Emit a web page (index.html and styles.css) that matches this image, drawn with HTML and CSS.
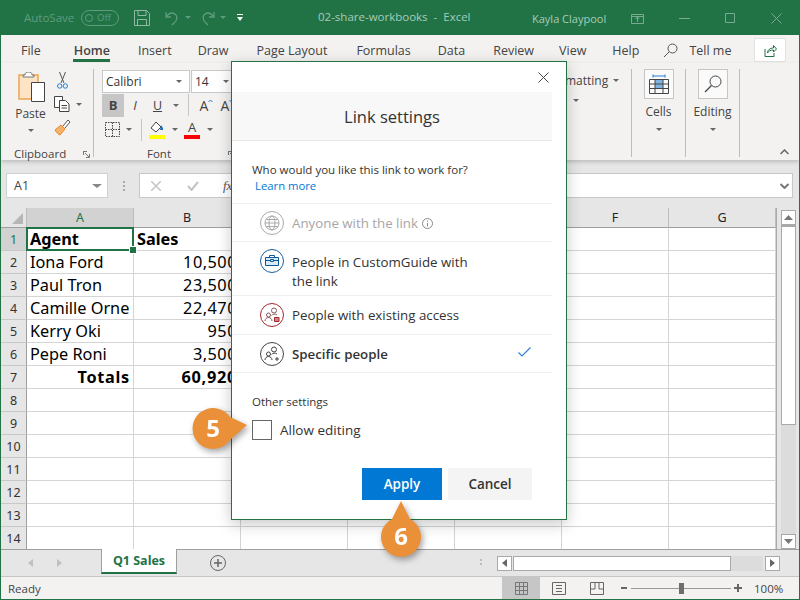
FILE: index.html
```html
<!DOCTYPE html>
<html lang="en">
<head>
<meta charset="utf-8">
<title>02-share-workbooks - Excel</title>
<link rel="stylesheet" href="styles.css">
</head>
<body>
<div class="app">
  <header class="titlebar">
    <span class="autosave">AutoSave</span>
    <span class="toggle"><i></i><b>Off</b></span>
    <svg class="t-save" width="16" height="16" viewBox="0 0 16 16" fill="none" stroke="#8fb9a3"><path d="M.5.500h12l3 3v12H.5z"/><path d="M4 .5v5h8v-5M3.500 15.500v-6h9v6"/></svg>
    <svg class="t-undo" width="28" height="18" viewBox="0 0 28 18" fill="none" stroke="#5f9c7e" stroke-width="1.3"><path d="M2 3v5h5M2 8c3-4 6-5 9-3 3 2 2 7-1 9l-2 2"/><path d="M21 7h6l-3 3z" fill="#5f9c7e" stroke="none"/></svg>
    <svg class="t-redo" width="28" height="18" viewBox="0 0 28 18" fill="none" stroke="#5f9c7e" stroke-width="1.3"><path d="M15 3v5h-5M15 8c-3-4-6-5-9-3-3 2-2 7 1 9l2 2"/><path d="M21 7h6l-3 3z" fill="#5f9c7e" stroke="none"/></svg>
    <svg class="t-qat" width="6" height="7" viewBox="0 0 6 7"><path d="M0 0h6v1H0zM0 3h6L3 7z" fill="#fff"/></svg>
    <span class="doc">02-share-workbooks&nbsp; -&nbsp; Excel</span>
    <span class="user">Kayla Claypool</span>
    <svg class="t-ribbon" width="13" height="10" viewBox="0 0 13 10" fill="none" stroke="#79ab92"><path d="M.5.500h12v9H.5zM6.500 8V3M4.500 5l2-2 2 2M.5 2.500h12"/></svg>
    <svg class="t-min" width="11" height="11" viewBox="0 0 11 11" stroke="#79ab92"><path d="M0 5.500h11"/></svg>
    <svg class="t-max" width="11" height="11" viewBox="0 0 11 11" fill="none" stroke="#79ab92"><path d="M.5.500h9v9h-9z"/></svg>
    <svg class="t-close" width="11" height="11" viewBox="0 0 11 11" stroke="#79ab92"><path d="M.5.500l10 10M10.500.5l-10 10"/></svg>
  </header>

  <nav class="tabs">
    <span class="tab file">File</span>
    <span class="tab active">Home</span>
    <span class="tab t-insert">Insert</span>
    <span class="tab">Draw</span>
    <span class="tab t-page">Page Layout</span>
    <span class="tab t-formulas">Formulas</span>
    <span class="tab">Data</span>
    <span class="tab t-review">Review</span>
    <span class="tab t-view">View</span>
    <span class="tab t-help">Help</span>
    <svg class="tell-icon" width="15" height="15" viewBox="0 0 15 15" fill="none" stroke="#555"><circle cx="9.500" cy="5.500" r="4.500"/><path d="M6.300 8.700L1 14"/></svg>
    <span class="tab tell">Tell me</span>
    <span class="share"><svg width="13" height="13" viewBox="0 0 13 13" fill="none" stroke="#217346"><path d="M1 5v7.500h9V9"/><path d="M3.500 9c0-3 2.500-5 6-5V1.500l3 3.500-3 3V6c-3 0-5 1-6 3z"/></svg></span>
  </nav>

  <section class="ribbon">
    <div class="group clipboard">
      <div class="group-body clip-body">
        <div class="paste">
          <svg width="28" height="31" viewBox="0 0 28 31"><path d="M1 3h19v24H1z" fill="#fce4c4" stroke="#f0a44e" stroke-width="1.500"/><path d="M5 5h11V3h-2c0-2-1-3-3.500-3S7 1 7 3H5z" fill="#fff" stroke="#777"/><path d="M13.500 10.500h13v19h-13z" fill="#fff" stroke="#444"/></svg>
          <span>Paste</span>
          <i class="caret"></i>
        </div>
        <div class="clip-tools">
          <svg class="scissors" width="11" height="17" viewBox="0 0 11 17" fill="none"><path d="M2.500 0l4.500 11M8.500 0L4 11" stroke="#555"/><circle cx="2.700" cy="14" r="2.200" stroke="#2b7cd3"/><circle cx="8.300" cy="14" r="2.200" stroke="#2b7cd3"/></svg>
          <div class="clip-row"><svg width="16" height="16" viewBox="0 0 16 16" fill="#fff" stroke="#444"><path d="M.5.500h8v11h-8z"/><path d="M5.500 4.500h6l3.500 3.500v7.500H5.500z"/><path d="M7.500 9.500h5.500M7.500 12h5.500" fill="none"/></svg><i class="caret"></i></div>
          <svg width="17" height="17" viewBox="0 0 17 17"><path d="M1 11l6-5 4 4-5 6c-1 0-4-3-5-5z" fill="#f5b26b" stroke="#e8842c"/><path d="M9 7l5-6 2 2-5 6" fill="#fff" stroke="#555"/></svg>
        </div>
      </div>
      <div class="group-label"><span>Clipboard</span><svg class="launcher" width="7" height="7" viewBox="0 0 7 7" fill="none" stroke="#777"><path d="M0 .5h4M.5 0v4M2 2l4 4M6.500 3v3.500H3"/></svg></div>
    </div>

    <div class="group font">
      <div class="group-body font-body">
        <div class="font-row first">
          <span class="combo name">Calibri<i class="caret"></i></span>
          <span class="combo size">14<i class="caret"></i></span>
        </div>
        <div class="font-row second">
          <span class="fbtn bold">B</span>
          <span class="fbtn italic">I</span>
          <span class="fbtn under">U</span><i class="caret"></i>
          <span class="vsep"></span>
          <span class="fbtn grow">A<svg width="5" height="4" viewBox="0 0 5 4" fill="none" stroke="#2b7cd3"><path d="M.5 3l2-2 2 2"/></svg></span>
          <span class="fbtn grow">A<svg width="5" height="4" viewBox="0 0 5 4" fill="none" stroke="#2b7cd3"><path d="M.5 1l2 2 2-2"/></svg></span>
        </div>
        <div class="font-row third">
          <svg class="borders" width="15" height="15" viewBox="0 0 15 15" fill="none" stroke="#444" stroke-dasharray="1.500 1"><path d="M.5.500h14v14H.5zM7.500.5v14M.5 7.500h14"/></svg><i class="caret"></i>
          <span class="vsep"></span>
          <span class="color"><svg width="14" height="13" viewBox="0 0 14 13" fill="none"><path d="M1 7l5-6 5 5-5 5z" fill="#fff" stroke="#444"/><path d="M11 4l2 3v2h-3z" fill="#1f6fc0"/></svg><b class="yellow"></b></span><i class="caret"></i>
          <span class="color"><span class="color-a">A</span><b class="red"></b></span><i class="caret"></i>
        </div>
      </div>
      <div class="group-label"><span>Font</span><svg class="launcher" width="7" height="7" viewBox="0 0 7 7" fill="none" stroke="#777"><path d="M0 .5h4M.5 0v4M2 2l4 4M6.500 3v3.500H3"/></svg></div>
    </div>

    <div class="group styles">
      <div class="styles-body">
        <span class="styles-text">matting<i class="caret"></i></span>
        <span class="styles-more"><i class="caret"></i></span>
      </div>
    </div>

    <div class="group stack">
      <span class="bigbtn"><svg width="22" height="20" viewBox="0 0 22 20" fill="none" stroke="#444"><path d="M7 5h8v9H7z" fill="#7eb3e2" stroke="none"/><path d="M1.500 5.500h19v14h-19zM1.500 10h19M1.500 14.500h19M7 5.500v14M15 5.500v14"/><path d="M5 2h12M5 .5v3M17 .5v3" stroke="#2b7cd3"/></svg></span>
      <span class="stack-label">Cells</span>
      <i class="caret"></i>
    </div>
    <div class="group stack">
      <span class="bigbtn"><svg width="18" height="18" viewBox="0 0 18 18" fill="none" stroke="#444"><circle cx="11.500" cy="6.500" r="5.500"/><path d="M7.500 10.500L1 17" stroke-width="1.300"/></svg></span>
      <span class="stack-label">Editing</span>
      <i class="caret"></i>
    </div>
    <svg class="collapse" width="9" height="6" viewBox="0 0 9 6" fill="none" stroke="#666" stroke-width="1.500"><path d="M.5 5l4-4 4 4"/></svg>
  </section>

  <div class="formula">
    <span class="namebox">A1<i class="caret big"></i></span>
    <span class="dots"></span>
    <div class="fxbar">
      <svg width="10" height="10" viewBox="0 0 10 10" stroke="#c4c4c4" stroke-width="1.500"><path d="M0 0l10 10M10 0L0 10"/></svg>
      <svg class="fx-check" width="12" height="10" viewBox="0 0 12 10" fill="none" stroke="#c4c4c4" stroke-width="2"><path d="M1 5l3.500 4L11 1"/></svg>
      <span class="fx">fx</span>
      <svg class="fx-chevron" width="9" height="6" viewBox="0 0 9 6" fill="none" stroke="#777" stroke-width="2"><path d="M.5 1l4 4 4-4"/></svg>
    </div>
  </div>

  <main class="work">
    <div class="sheet">
      <div class="ch corner"><i></i></div><div class="ch sel">A</div><div class="ch">B</div><div class="ch"></div><div class="ch"></div><div class="ch"></div><div class="ch">F</div><div class="ch">G</div>
      <div class="rh sel">1</div><div class="c b a1">Agent</div><div class="c b">Sales</div><div class="c"></div><div class="c"></div><div class="c"></div><div class="c"></div><div class="c"></div>
      <div class="rh">2</div><div class="c">Iona Ford</div><div class="c n">10,500</div><div class="c"></div><div class="c"></div><div class="c"></div><div class="c"></div><div class="c"></div>
      <div class="rh">3</div><div class="c">Paul Tron</div><div class="c n">23,500</div><div class="c"></div><div class="c"></div><div class="c"></div><div class="c"></div><div class="c"></div>
      <div class="rh">4</div><div class="c">Camille Orne</div><div class="c n">22,470</div><div class="c"></div><div class="c"></div><div class="c"></div><div class="c"></div><div class="c"></div>
      <div class="rh">5</div><div class="c">Kerry Oki</div><div class="c n">950</div><div class="c"></div><div class="c"></div><div class="c"></div><div class="c"></div><div class="c"></div>
      <div class="rh">6</div><div class="c">Pepe Roni</div><div class="c n">3,500</div><div class="c"></div><div class="c"></div><div class="c"></div><div class="c"></div><div class="c"></div>
      <div class="rh">7</div><div class="c b n">Totals</div><div class="c b n">60,920</div><div class="c"></div><div class="c"></div><div class="c"></div><div class="c"></div><div class="c"></div>
      <div class="rh">8</div><div class="c"></div><div class="c"></div><div class="c"></div><div class="c"></div><div class="c"></div><div class="c"></div><div class="c"></div>
      <div class="rh">9</div><div class="c"></div><div class="c"></div><div class="c"></div><div class="c"></div><div class="c"></div><div class="c"></div><div class="c"></div>
      <div class="rh">10</div><div class="c"></div><div class="c"></div><div class="c"></div><div class="c"></div><div class="c"></div><div class="c"></div><div class="c"></div>
      <div class="rh">11</div><div class="c"></div><div class="c"></div><div class="c"></div><div class="c"></div><div class="c"></div><div class="c"></div><div class="c"></div>
      <div class="rh">12</div><div class="c"></div><div class="c"></div><div class="c"></div><div class="c"></div><div class="c"></div><div class="c"></div><div class="c"></div>
      <div class="rh">13</div><div class="c"></div><div class="c"></div><div class="c"></div><div class="c"></div><div class="c"></div><div class="c"></div><div class="c"></div>
      <div class="rh">14</div><div class="c"></div><div class="c"></div><div class="c"></div><div class="c"></div><div class="c"></div><div class="c"></div><div class="c"></div>
    </div>
    <div class="vscroll">
      <span class="sbtn"><svg width="9" height="5" viewBox="0 0 9 5"><path d="M0 5l4.500-5L9 5z" fill="#777"/></svg></span>
      <span class="vthumb"></span>
      <span class="vtrack"></span>
      <span class="sbtn"><svg width="9" height="5" viewBox="0 0 9 5"><path d="M0 0l4.500 5L9 0z" fill="#777"/></svg></span>
    </div>
  </main>

  <div class="sheetbar">
    <svg class="nav-l" width="5" height="8" viewBox="0 0 5 8"><path d="M5 0L0 4l5 4z" fill="#c0c0c0"/></svg>
    <svg class="nav-r" width="5" height="8" viewBox="0 0 5 8"><path d="M0 0l5 4-5 4z" fill="#c0c0c0"/></svg>
    <span class="sheet-tab">Q1 Sales</span>
    <svg class="add" width="16" height="16" viewBox="0 0 16 16" fill="none" stroke="#666"><circle cx="8" cy="8" r="7.500"/><path d="M8 4v8M4 8h8" stroke-width="1.500"/></svg>
    <span class="hdots"></span>
    <div class="hscroll">
      <span class="hbtn"><svg width="5" height="8" viewBox="0 0 5 8"><path d="M5 0L0 4l5 4z" fill="#666"/></svg></span>
      <span class="hthumb"></span>
      <span class="htrack"></span>
      <span class="hbtn"><svg width="5" height="8" viewBox="0 0 5 8"><path d="M0 0l5 4-5 4z" fill="#666"/></svg></span>
    </div>
  </div>

  <footer class="status">
    <span class="ready">Ready</span>
    <span class="view on"><svg width="13" height="13" viewBox="0 0 13 13" fill="none" stroke="#777"><path d="M.5.500h12v12H.5zM4.500.5v12M8.500.5v12M.5 4.500h12M.5 8.500h12"/></svg></span>
    <span class="view"><svg width="14" height="13" viewBox="0 0 14 13" fill="none" stroke="#666"><path d="M.5.500h13v12H.5zM4 3.500h6M4 6.500h6M4 9.500h6"/></svg></span>
    <span class="view"><svg width="14" height="13" viewBox="0 0 14 13" fill="none" stroke="#666"><path d="M.5.500h13v12H.5zM.5 7h4.500V.500M9 .5V7h4.500"/></svg></span>
    <span class="zoom-minus"></span>
    <span class="slider"><i></i></span>
    <span class="zoom-plus"></span>
    <span class="pct">100%</span>
  </footer>
</div>

<div class="dialog">
  <div class="dlg-top"><svg width="11" height="11" viewBox="0 0 11 11" stroke="#444"><path d="M.5.500l10 10M10.500.5l-10 10"/></svg></div>
  <h1 class="dlg-title">Link settings</h1>
  <div class="dlg-q">
    <p>Who would you like this link to work for?</p>
    <a class="learn">Learn more</a>
  </div>
  <div class="opt disabled">
    <svg class="oi" width="24" height="24" viewBox="0 0 24 24" fill="none" stroke="#a9a9a9"><circle cx="12" cy="12" r="11.500"/><circle cx="12" cy="12" r="7"/><ellipse cx="12" cy="12" rx="3" ry="7"/><path d="M5 12h14M6 8.500h12M6 15.500h12"/></svg>
    <span class="ot">Anyone with the link <svg width="11" height="11" viewBox="0 0 11 11" fill="none" stroke="#8a8a8a"><circle cx="5.500" cy="5.500" r="5"/><path d="M5.500 5v3.500M5.500 2.500v1.200"/></svg></span>
  </div>
  <div class="opt tall">
    <svg class="oi" width="24" height="24" viewBox="0 0 24 24" fill="none" stroke="#0f5a99"><circle cx="12" cy="12" r="11.500" stroke="#155f9e"/><path d="M5.500 8.500h13v8h-13z" fill="#d8e9f7"/><path d="M9.500 8.500v-2h5v2M5.500 11.500h5M13.500 11.500h5M10.500 10.500h3v2h-3z"/></svg>
    <span class="ot">People in CustomGuide with<br>the link</span>
  </div>
  <div class="opt existing">
    <svg class="oi" width="24" height="24" viewBox="0 0 24 24" fill="none" stroke="#a4262c"><circle cx="12" cy="12" r="11.500"/><g stroke="#8a5a5c"><circle cx="14" cy="7.500" r="2.500"/><circle cx="8.500" cy="12" r="2"/><path d="M5 18c0-2 1.500-3.500 3.500-3.500S12 16 12 18M11.500 12.500c1-1.500 4-2 5.500-.5"/></g><path d="M14.500 14.500h4.500v4h-4.500z" fill="#c9878a"/></svg>
    <span class="ot">People with existing access</span>
  </div>
  <div class="opt sel">
    <svg class="oi" width="24" height="24" viewBox="0 0 24 24" fill="none" stroke="#444"><circle cx="12" cy="12" r="11.500"/><circle cx="14" cy="7.500" r="2.500"/><circle cx="8.500" cy="12" r="2"/><path d="M5 18c0-2 1.500-3.500 3.500-3.500S12 16 12 18M11.500 12.500c1-1.500 4-2 5.500-.5M17 15v4M15 17h4"/></svg>
    <span class="ot">Specific people</span>
    <svg class="check" width="13" height="10" viewBox="0 0 13 10" fill="none" stroke="#2b7cd3" stroke-width="1.100"><path d="M.5 5.500l3.500 3.500L12.500.5"/></svg>
  </div>
  <p class="other">Other settings</p>
  <label class="allow"><span class="box"></span><span class="allow-text">Allow editing</span></label>
  <div class="actions">
    <span class="apply">Apply</span>
    <span class="cancel">Cancel</span>
  </div>
</div>

<svg class="callout c5" width="56" height="46" viewBox="0 0 56 46"><path d="M38 13L55 21 38 36A20.500 20.500 0 1 1 38 13z" fill="#ea9038"/><text x="21" y="33" text-anchor="middle">5</text></svg>
<svg class="callout c6" width="42" height="57" viewBox="0 0 42 57"><path d="M21 0l9 18A20 20 0 1 1 12 18z" fill="#ea9038"/><text x="21" y="44" text-anchor="middle">6</text></svg>
</body>
</html>
```
FILE: styles.css
```css
* { box-sizing: border-box; }
html, body { margin: 0; padding: 0; }
body { width: 800px; height: 600px; overflow: hidden; position: relative; font-family: "Open Sans", "Liberation Sans", sans-serif; color: #333; background: #e6e6e6; }
svg { display: block; flex: none; }
i, b { font-style: normal; }

.app { width: 800px; height: 600px; display: flex; flex-direction: column; border: solid #217346; border-width: 0 1px 1px; overflow: hidden; }

.caret { display: inline-block; flex: none; width: 0; height: 0; border: solid transparent; border-width: 3px 3.5px 0; border-top-color: #666; }
.caret.big { border-width: 4px 5px 0; border-top-color: #888; }

/* title bar */
.titlebar { height: 35px; margin: 0 -1px; flex: none; background: #217346; display: flex; align-items: center; color: #a8cbb9; font-size: 11.5px; padding-left: 24px; }
.autosave { color: #5f9c7e; font-size: 11.5px; width: 57px; }
.toggle { width: 38px; height: 16px; border: 1px solid #5f9c7e; border-radius: 8px; display: flex; align-items: center; padding-left: 3px; gap: 4px; color: #5f9c7e; font-size: 9.5px; }
.toggle i { width: 8px; height: 8px; border: 1px solid #5f9c7e; border-radius: 50%; }
.toggle b { font-weight: 400; }
.t-save { margin-left: 15px; }
.t-undo { margin-left: 14px; }
.t-redo { margin-left: 7px; }
.t-qat { margin-left: 10px; }
.doc { margin-left: 75px; width: 214px; white-space: nowrap; margin-top: -2px; }
.user { width: 99px; white-space: nowrap; font-size: 11px; margin-top: 2px; }
.t-ribbon { margin-top: 2px; }
.t-min { margin-left: 35px; margin-top: 2px; }
.t-max { margin-left: 35px; margin-top: 2px; }
.t-close { margin-left: 35px; margin-top: 2px; }

/* tabs */
.tabs { height: 28px; flex: none; background: #f3f2f1; display: flex; align-items: center; padding-left: 20px; font-size: 12.5px; color: #444; position: relative; }
.tab { white-space: nowrap; height: 28px; line-height: 31px; margin-right: 28px; position: relative; }
.tab.file { margin-right: 33px; }
.tab.active { font-weight: 600; margin-right: 28px; }
.tab.active::after { content: ""; position: absolute; left: -1px; right: 0; bottom: 1px; height: 3px; background: #217346; }
.t-insert { margin-right: 26px; }
.t-page { margin-right: 29px; }
.t-formulas { margin-right: 27px; }
.t-review { margin-right: 25px; }
.t-view { margin-right: 26px; }
.t-help { margin-right: 27px; }
.tell-icon { margin: 3px 11px 0 -3px; }
.tab.tell { margin: 0 23px 0 0; }
.share { width: 32px; height: 24px; margin-top: 2px; background: #fff; border: 1px solid #e1e1e1; border-radius: 2px; display: flex; align-items: center; justify-content: center; }

/* ribbon */
.ribbon { height: 97px; flex: none; background: #f3f2f1; display: flex; padding-top: 6px; box-shadow: 0 2px 4px rgba(0,0,0,.18); position: relative; z-index: 1; }
.group { height: 88px; border-right: 1px solid #bdbdbd; flex: none; position: relative; display: flex; flex-direction: column; font-size: 11.5px; color: #444; }
.group-body { flex: none; height: 75px; }
.group-label { height: 18px; flex: none; display: flex; align-items: center; font-size: 11.5px; }
.clipboard { width: 93px; }
.clip-body { display: flex; padding-left: 14px; gap: 8px; padding-top: 3px; }
.paste { width: 31px; display: flex; flex-direction: column; align-items: center; font-size: 12px; }
.paste svg { margin-left: 2px; }
.paste span { margin-top: 3px; line-height: 15px; }
.paste .caret { margin-top: 8px; }
.clip-tools { display: flex; flex-direction: column; gap: 7px; align-items: flex-start; }
.scissors { margin-left: 3px; }
.clip-row { display: flex; align-items: center; gap: 6px; }
.clipboard .group-label { padding-left: 13px; }
.clipboard .launcher { margin-left: 17px; margin-top: 3px; }

.font { width: 300px; border-right: none; padding-left: 8px; }
.font-row { display: flex; align-items: center; }
.first { gap: 1px; height: 24px; }
.combo { height: 23px; background: #fff; border: 1px solid #c8c8c8; display: flex; align-items: center; justify-content: space-between; padding: 0 7px 0 3px; font-size: 12px; color: #333; }
.name { width: 88px; }
.size { width: 60px; justify-content: flex-start; gap: 14px; }
.second { height: 24px; }
.fbtn { display: flex; justify-content: center; align-items: center; width: 22px; height: 23px; font-size: 13px; color: #444; }
.bold { background: #c6c6c6; font-weight: 700; }
.italic { font-style: italic; }
.under { text-decoration: underline; width: 23px; margin-right: 4px; font-size: 12.5px; }
.vsep { width: 1px; height: 22px; background: #c6c6c6; margin: 0 7px 0 9px; }
.grow { width: 21px; font-size: 14px; }
.grow svg { margin-top: -9px; }
.third { height: 25px; padding-left: 3px; }
.third .caret { margin-left: 6px; }
.color { display: flex; flex-direction: column; align-items: center; width: 16px; }
.color b { display: block; width: 16px; height: 4px; margin-top: 1px; }
.third .color + .caret { margin-right: 6px; margin-left: 7px; }
.yellow { background: #ffff00; }
.red { background: #ff0000; }
.color-a { font-size: 13px; line-height: 13px; }
.font .group-label { padding-left: 45px; }
.font .launcher { margin-left: 57px; margin-top: 3px; }

.styles { width: 238px; }
.styles-body { padding-left: 171px; }
.styles-text { display: flex; align-items: center; gap: 5px; white-space: nowrap; font-size: 12px; height: 22px; }
.styles-more { display: block; margin-left: 8px; margin-top: 7px; line-height: 0; }

.stack { width: 54px; align-items: center; }
.bigbtn { width: 30px; height: 30px; background: #fafafa; border: 1px solid #c6c6c6; display: flex; align-items: center; justify-content: center; }
.stack-label { font-size: 12px; margin-top: 5px; line-height: 16px; }
.stack .caret { margin-top: 8px; }
.collapse { position: absolute; right: 10px; bottom: 5px; }

/* formula */
.formula { height: 48px; flex: none; background: #e6e6e6; display: flex; align-items: flex-start; padding: 13px 0 0 5px; }
.namebox { width: 102px; height: 25px; background: #fff; border: 1px solid #d0d0d0; display: flex; align-items: center; justify-content: space-between; padding: 0 5px 0 7px; font-size: 12.5px; color: #444; }
.dots { width: 2px; height: 10px; margin: 8px 14px 0 15px; background: repeating-linear-gradient(#aaa 0 2px, transparent 2px 4px); }
.fxbar { width: 654px; height: 25px; background: #fff; border: 1px solid #c8c8c8; display: flex; align-items: center; padding: 0 3px 0 11px; }
.fx-check { margin-left: 26px; }
.fx { font-family: "Liberation Serif", serif; font-style: italic; font-size: 13px; color: #555; margin-left: 24px; }
.fx-chevron { margin-left: auto; }

/* sheet */
.work { height: 341px; flex: none; display: flex; overflow: hidden; background: #e6e6e6; }
.sheet { width: 776px; display: grid; grid-template-columns: 26px repeat(7, 107px); grid-template-rows: 20px repeat(14, 23px); height: 341px; overflow: hidden; flex: none; background: #fff; font-family: "Noto Sans", "Open Sans", sans-serif; border-right: 1px solid #ababab; }
.ch { background: #e6e6e6; border-right: 1px solid #bcbcbc; border-bottom: 1px solid #9f9f9f; display: flex; align-items: center; justify-content: center; font-size: 12.5px; color: #222; }
.ch.sel { background: #d2d2d2; color: #217346; }
.corner { position: relative; }
.corner i { position: absolute; right: 3px; bottom: 3px; width: 0; height: 0; border: solid transparent; border-width: 0 0 11px 11px; border-bottom-color: #b6b6b6; }
.rh { background: #e6e6e6; border-right: 1px solid #9f9f9f; border-bottom: 1px solid #c8c8c8; display: flex; align-items: center; justify-content: center; font-size: 12.5px; color: #333; }
.rh.sel { background: #d2d2d2; color: #217346; }
.c { border-right: 1px solid #d4d4d4; border-bottom: 1px solid #d4d4d4; font-size: 16.3px; line-height: 22px; padding: 0 3px; color: #000; white-space: nowrap; overflow: hidden; }
.b { font-weight: 700; }
.n { text-align: right; letter-spacing: .5px; }
.n.b { letter-spacing: .7px; }
.a1 { position: relative; overflow: visible; }
.a1::before { content: ""; position: absolute; inset: -1px; border: 2px solid #217346; }
.a1::after { content: ""; position: absolute; right: -4px; bottom: -4px; width: 6px; height: 6px; background: #217346; border: 1px solid #fff; }

.vscroll { width: 22px; display: flex; flex-direction: column; padding: 2px 3px 0 4px; }
.sbtn { width: 15px; height: 15px; flex: none; background: #fff; border: 1px solid #a9a9a9; display: flex; align-items: center; justify-content: center; }
.vthumb { width: 15px; height: 200px; flex: none; background: #fff; border: 1px solid #a9a9a9; border-top-width: 2px; }
.vtrack { flex: 1; width: 15px; background: #dcdcdc; }

/* sheet bar */
.sheetbar { height: 28px; flex: none; background: #e6e6e6; border-top: 1px solid #9f9f9f; border-bottom: 1px solid #c6c6c6; display: flex; align-items: center; position: relative; }
.nav-l { margin-left: 27px; }
.nav-r { margin-left: 24px; }
.sheet-tab { width: 76px; height: 25px; margin: -2px 0 0 39px; background: #fff; border: solid #9f9f9f; border-width: 0 1px; border-bottom: 2px solid #217346; display: flex; align-items: center; justify-content: center; color: #217346; font-weight: 700; font-size: 12.5px; position: relative; top: -1px; }
.add { margin-left: 33px; }
.hdots { width: 2px; height: 8px; margin-left: 254px; background: repeating-linear-gradient(#bbb 0 2px, transparent 2px 4px); }
.hscroll { display: flex; align-items: center; margin-left: 15px; }
.hbtn { width: 15px; height: 15px; background: #fff; border: 1px solid #a9a9a9; display: flex; align-items: center; justify-content: center; }
.hthumb { width: 218px; height: 15px; margin-left: 1px; background: #fff; border: 1px solid #a9a9a9; }
.htrack { width: 32px; height: 15px; background: #dcdcdc; margin-right: 2px; }

/* status */
.status { height: 22px; flex: none; background: #f3f2f1; display: flex; align-items: center; font-size: 11.5px; color: #444; }
.ready { margin-left: 7px; width: 494px; }
.view { width: 38px; height: 22px; display: flex; align-items: center; justify-content: center; }
.view.on { background: #c6c6c6; }
.zoom-minus { width: 6px; height: 2px; background: #666; margin-left: 5px; }
.slider { width: 100px; height: 1px; background: #999; margin-left: 4px; position: relative; }
.slider i { position: absolute; left: 48px; top: -5px; width: 5px; height: 11px; background: #6e6e6e; }
.zoom-plus { width: 8px; height: 8px; margin-left: 3px; background: linear-gradient(#666,#666) center/8px 2px no-repeat, linear-gradient(#666,#666) center/2px 8px no-repeat; }
.pct { margin-left: 12px; }

/* dialog overlay */
.dialog { position: absolute; left: 231px; top: 61px; width: 336px; height: 459px; background: #fff; border: 1px solid #217346; box-shadow: 0 4px 14px rgba(0,0,0,.22); z-index: 5; display: flex; flex-direction: column; padding-right: 14px; }
.dlg-top { height: 30px; flex: none; display: flex; justify-content: flex-end; align-items: flex-start; padding-top: 10px; }
.dlg-top svg { margin-right: 3px; }
.dlg-title { margin: 0; height: 49px; flex: none; background: #f8f8f8; border-bottom: 1px solid #e6e6e6; font-size: 16.5px; font-weight: 400; color: #333; text-align: center; line-height: 50px; }
.dlg-q { height: 63px; flex: none; padding: 21px 0 0 20px; border-bottom: 1px solid #efefef; font-size: 11.5px; color: #333; }
.dlg-q p { margin: 0; line-height: 16px; }
.learn { display: block; margin-left: 3px; color: #0078d4; line-height: 16px; font-size: 11.3px; }
.opt { height: 38px; flex: none; border-bottom: 1px solid #efefef; display: flex; align-items: center; padding-left: 28px; font-size: 13.3px; color: #333; }
.oi { margin-right: 8px; }
.ot { margin-top: 1px; }
.opt.tall { height: 54px; align-items: flex-start; padding-top: 7px; }
.opt.existing { height: 39px; }
.opt.existing .ot { margin-top: -1px; }
.opt.tall .ot { line-height: 19px; margin-top: 4px; }
.opt.disabled .ot { color: #a6a6a6; display: flex; align-items: center; gap: 4px; }
.opt.sel { font-weight: 600; position: relative; }
.check { position: absolute; right: 21px; top: 12px; }
.other { margin: 21px 0 0 20px; font-size: 11.5px; line-height: 16px; color: #333; flex: none; }
.allow { display: flex; align-items: center; margin: 9px 0 0 20px; font-size: 13.5px; line-height: 20px; color: #333; flex: none; }
.allow-text { padding-top: 1px; }
.box { width: 20px; height: 20px; border: 1px solid #666; margin-right: 8px; background: #fff; }
.actions { display: flex; justify-content: flex-end; margin: 28px 20px 0 0; gap: 6px; flex: none; }
.apply, .cancel { height: 32px; display: flex; align-items: center; justify-content: center; font-size: 13.5px; font-weight: 600; }
.apply { width: 80px; background: #0078d4; color: #fff; }
.cancel { width: 84px; background: #f4f4f4; color: #333; }

.callout { position: absolute; z-index: 6; filter: drop-shadow(2px 3px 3px rgba(0,0,0,.35)); overflow: visible; }
.callout text { font-family: "Open Sans", sans-serif; font-weight: 700; font-size: 24px; fill: #fff; }
.c5 { left: 192px; top: 404px; }
.c6 { left: 380px; top: 501px; }
```
